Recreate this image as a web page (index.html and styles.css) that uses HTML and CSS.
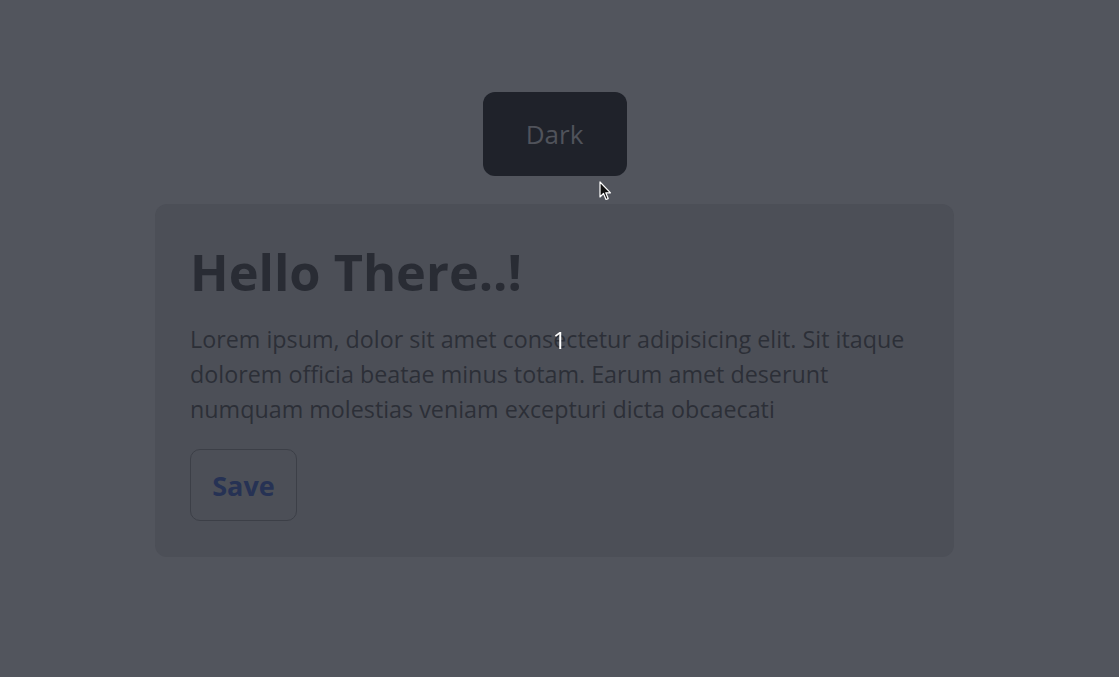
FILE: index.html
```html
<!DOCTYPE html>
<html lang="en">
<head>
<meta charset="utf-8">
<title>Hello There</title>
<link rel="stylesheet" href="styles.css">
</head>
<body>
<main class="page">
  <button class="theme-btn">Dark</button>
  <section class="card">
    <h1 class="card-title">Hello There..!</h1>
    <p class="card-text">Lorem ipsum, dolor sit amet consectetur adipisicing elit. Sit itaque dolorem officia beatae minus totam. Earum amet deserunt numquam molestias veniam excepturi dicta obcaecati</p>
    <button class="save-btn">Save</button>
  </section>
</main>
<div class="counter">1</div>
<svg class="cursor" width="14" height="21" viewBox="0 0 14 21"><path d="M1 1 L1 16 L4.5 12.5 L7 18.5 L9.2 17.6 L6.8 11.8 L11.5 11.8 Z" fill="#111" stroke="#fff" stroke-width="1.2" stroke-linejoin="round"/></svg>
</body>
</html>
```
FILE: styles.css
```css
html, body {
  margin: 0;
  padding: 0;
  background: #52555d;
  height: 100%;
  font-family: "Open Sans", "Noto Sans", sans-serif;
}
.page {
  display: flex;
  flex-direction: column;
  align-items: center;
  padding: 92px 10px 0 0;
  gap: 28px;
}
.theme-btn {
  width: 144px;
  height: 84px;
  border: none;
  border-radius: 12px;
  background: #1f222a;
  color: #50535b;
  font-family: inherit;
  font-size: 26px;
  padding: 0;
}
.card {
  box-sizing: border-box;
  width: 799px;
  background: #4c4f57;
  border-radius: 12px;
  padding: 32px 35px 36px;
}
.card-title {
  margin: 0;
  font-size: 50.5px;
  font-weight: 700;
  line-height: 72px;
  color: #292c34;
}
.card-text {
  margin: 14px 0 22px;
  font-size: 23.3px;
  line-height: 35px;
  color: #2c2f37;
}
.save-btn {
  width: 107px;
  height: 72px;
  background: transparent;
  border: 1px solid #3c3f47;
  border-radius: 10px;
  font-family: inherit;
  font-size: 27px;
  font-weight: 700;
  color: #263254;
  padding: 0;
}
.counter {
  position: fixed;
  left: 50%;
  top: 50%;
  transform: translate(-50%, -50%);
  color: #fff;
  font-size: 24px;
}
.cursor {
  position: absolute;
  left: 599px;
  top: 181px;
}
```
